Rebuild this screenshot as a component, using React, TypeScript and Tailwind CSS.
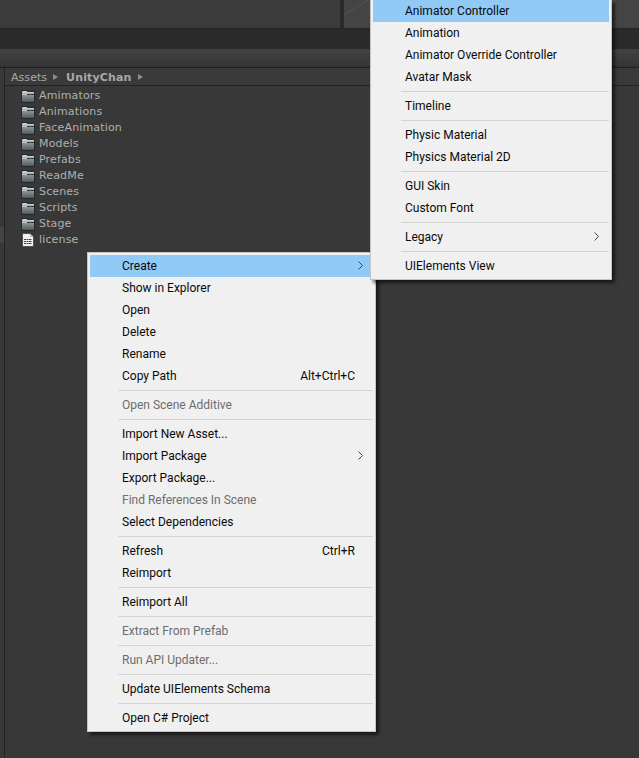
import React from "react";

type Row = { t: string; s?: string; d?: boolean; a?: boolean; h?: boolean } | "sep";

const mainMenu: Row[] = [
  { t: "Create", a: true, h: true },
  { t: "Show in Explorer" },
  { t: "Open" },
  { t: "Delete" },
  { t: "Rename" },
  { t: "Copy Path", s: "Alt+Ctrl+C" },
  "sep",
  { t: "Open Scene Additive", d: true },
  "sep",
  { t: "Import New Asset..." },
  { t: "Import Package", a: true },
  { t: "Export Package..." },
  { t: "Find References In Scene", d: true },
  { t: "Select Dependencies" },
  "sep",
  { t: "Refresh", s: "Ctrl+R" },
  { t: "Reimport" },
  "sep",
  { t: "Reimport All" },
  "sep",
  { t: "Extract From Prefab", d: true },
  "sep",
  { t: "Run API Updater...", d: true },
  "sep",
  { t: "Update UIElements Schema" },
  "sep",
  { t: "Open C# Project" },
];

const subMenu: Row[] = [
  { t: "Animator Controller", h: true },
  { t: "Animation" },
  { t: "Animator Override Controller" },
  { t: "Avatar Mask" },
  "sep",
  { t: "Timeline" },
  "sep",
  { t: "Physic Material" },
  { t: "Physics Material 2D" },
  "sep",
  { t: "GUI Skin" },
  { t: "Custom Font" },
  "sep",
  { t: "Legacy", a: true },
  "sep",
  { t: "UIElements View" },
];

const folders = ["Amimators", "Animations", "FaceAnimation", "Models", "Prefabs", "ReadMe", "Scenes", "Scripts", "Stage"];

function Chevron() {
  return (
    <svg width="5" height="9" viewBox="0 0 5 9" className="absolute right-[10px] top-[6px]" fill="none">
      <path d="M0.5 0.5 L4.5 4.5 L0.5 8.5" stroke="#444" strokeWidth="1" />
    </svg>
  );
}

function Menu({ rows }: { rows: Row[] }) {
  return (
    <>
      {rows.map((r, i) =>
        r === "sep" ? (
          <div key={i} className="flex h-[7px] items-center pl-[28px]">
            <div className="h-px w-full bg-[#d4d4d4]" />
          </div>
        ) : (
          <div
            key={i}
            className={`relative flex h-[22px] items-center justify-between pl-[32px] leading-[22px] ${r.h ? "bg-[#91c9f7]" : ""} ${r.d ? "text-[#6d6d6d]" : "text-[#0a0a0a]"}`}
          >
            <span>{r.t}</span>
            {r.s ? <span className="mr-[18px]">{r.s}</span> : null}
            {r.a ? <Chevron /> : null}
          </div>
        )
      )}
    </>
  );
}

function FolderIcon() {
  return (
    <svg width="14" height="13" viewBox="0 0 14 13" className="shrink-0">
      <defs>
        <linearGradient id="fg" x1="0" y1="0" x2="0" y2="1">
          <stop offset="0" stopColor="#8d9799" />
          <stop offset="1" stopColor="#515b5f" />
        </linearGradient>
      </defs>
      <path d="M0 2 Q0 1 1 1 L1.5 0 H6 L7 1 H13 Q14 1 14 2 V12 Q14 13 13 13 H1 Q0 13 0 12 Z" fill="#25282a" />
      <path d="M1 3 V2 L2 1 H5.5 L6.5 2 H13 V3 Z" fill="#cfd2d2" />
      <rect x="1" y="3" width="12" height="1" fill="#a5abab" />
      <rect x="1" y="4" width="5" height="1" fill="#c4c8c8" />
      <rect x="1" y="5" width="12" height="7" fill="url(#fg)" />
      <rect x="6" y="4" width="7" height="1" fill="#3a3e40" />
    </svg>
  );
}

function FileIcon() {
  return (
    <svg width="12" height="14" viewBox="0 0 12 14" className="shrink-0">
      <path d="M0.5 0.5 H8 L11.5 4 V13.5 H0.5 Z" fill="#f1f1f1" stroke="#222" strokeWidth="0.6" />
      <path d="M8 0.5 V4 H11.5 Z" fill="#bdbdbd" />
      <path d="M2 6.5 H10 M2 8.5 H10 M2 10.5 H10" stroke="#444" strokeWidth="1" strokeDasharray="2 0.5" />
    </svg>
  );
}

export default function App() {
  return (
    <div className="relative h-[758px] w-[639px] overflow-hidden bg-[#383838] font-['DejaVu_Sans',sans-serif] text-[11px] text-[#b0b0b0]">
      <div className="flex h-[29px] border-b border-[#232323] bg-[#3b3b3b]">
        <div className="w-[340px]" />
        <div className="h-[28px] w-[4px] bg-[#2a2a2a]" />
        <div className="flex-1 bg-[#444444]">
          <svg width="40" height="28" viewBox="0 0 40 28" fill="none">
            <path d="M0 15 L24 0" stroke="#5a5a5a" strokeWidth="1" strokeDasharray="2 1" />
          </svg>
        </div>
      </div>
      <div className="h-[21px] border-b border-[#3f3f3f] bg-[#2a2a2a]" />
      <div className="h-[18px] border-b border-[#1e1e1e] bg-gradient-to-b from-[#424242] to-[#343434]" />
      <div className="flex h-[690px]">
        <div className="w-[5px] border-r border-[#232323] bg-[#383838] pt-[159px]">
          <div className="h-[16px] bg-[#444444]" />
        </div>
        <div className="flex-1">
          <div className="flex h-[18px] items-center border-b border-[#232323] bg-[#3a3a3a] pl-[6px] pt-[1px] leading-none text-[#a8a8a8]">
            <span className="tracking-[0.05px]">Assets</span>
            <svg width="5" height="6" viewBox="0 0 5 6" className="ml-[6px] mr-[8px]">
              <path d="M0 0 L5 3 L0 6 Z" fill="#8c8c8c" />
            </svg>
            <span className="font-bold tracking-[0.15px]">UnityChan</span>
            <svg width="5" height="6" viewBox="0 0 5 6" className="ml-[6px]">
              <path d="M0 0 L5 3 L0 6 Z" fill="#8c8c8c" />
            </svg>
          </div>
          <div className="pt-[2px]">
            {folders.map((f) => (
              <div key={f} className="flex h-[16px] items-center gap-[4px] pl-[16px] tracking-[0.15px]">
                <FolderIcon />
                <span>{f}</span>
              </div>
            ))}
            <div className="flex h-[16px] items-center gap-[5px] pl-[17px] tracking-[0.15px]">
              <FileIcon />
              <span>license</span>
            </div>
          </div>
        </div>
      </div>

      <div className="absolute left-[87px] top-[252px] h-[480px] w-[289px] border border-[#c4c4c4] bg-[#f0f0f0] p-[2px] font-['Roboto',sans-serif] text-[12px] shadow-[3px_3px_3px_rgba(0,0,0,0.55)]">
        <Menu rows={mainMenu} />
      </div>
      <div className="absolute left-[370px] top-0 h-[280px] w-[242px] border-x border-b border-[#c4c4c4] bg-[#f0f0f0] px-[2px] font-['Roboto',sans-serif] text-[12px] shadow-[3px_3px_3px_rgba(0,0,0,0.55)]">
        <Menu rows={subMenu} />
      </div>
    </div>
  );
}
